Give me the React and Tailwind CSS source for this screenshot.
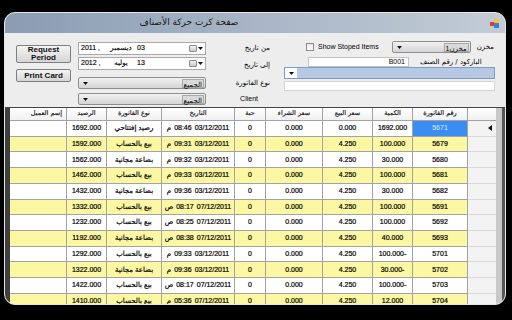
import React from 'react';

const rows = [
  ['5671', '1692.000', '0.000', '0.000', '0', '03/12/2011', '08:46', 'م', 'رصيد إفتتاحي', '1692.000'],
  ['5679', '100.000', '4.250', '0.000', '0', '03/12/2011', '09:31', 'م', 'بيع بالحساب', '1592.000'],
  ['5680', '30.000', '4.250', '0.000', '0', '03/12/2011', '09:32', 'م', 'بضاعة مجانية', '1562.000'],
  ['5681', '100.000', '4.250', '0.000', '0', '03/12/2011', '09:33', 'م', 'بيع بالحساب', '1462.000'],
  ['5682', '30.000', '4.250', '0.000', '0', '03/12/2011', '09:36', 'م', 'بضاعة مجانية', '1432.000'],
  ['5691', '100.000', '4.250', '0.000', '0', '07/12/2011', '08:17', 'ص', 'بيع بالحساب', '1332.000'],
  ['5692', '100.000', '4.250', '0.000', '0', '07/12/2011', '08:25', 'ص', 'بيع بالحساب', '1232.000'],
  ['5693', '40.000', '4.250', '0.000', '0', '07/12/2011', '08:38', 'ص', 'بضاعة مجانية', '1192.000'],
  ['5701', '100.000-', '4.250', '0.000', '0', '03/12/2011', '09:33', 'م', 'بيع بالحساب', '1292.000'],
  ['5702', '30.000-', '4.250', '0.000', '0', '03/12/2011', '09:36', 'م', 'بضاعة مجانية', '1322.000'],
  ['5703', '100.000-', '4.250', '0.000', '0', '07/12/2011', '08:17', 'ص', 'بيع بالحساب', '1422.000'],
  ['5704', '12.000', '4.250', '0.000', '0', '07/12/2011', '05:36', 'م', 'بيع بالحساب', '1410.000'],
];

const font = { fontFamily: '"Liberation Sans", "DejaVu Sans", sans-serif' };
const arabic = { fontFamily: '"DejaVu Sans", sans-serif' };

const Arrow = () => (
  <svg width="5" height="3" viewBox="0 0 5 3"><path d="M0 0h5L2.5 3z" fill="#111" /></svg>
);

const PickerButton = () => (
  <div className="flex items-center gap-[1px] mr-[2px]">
    <div className="w-[8px] h-[7px] border border-[#8a8a8a] bg-gradient-to-b from-[#f4f4f4] to-[#c9c9c9] rounded-[1px]" />
    <Arrow />
  </div>
);

const DatePicker = ({ year, month, day }) => (
  <div className="h-[13px] w-[128px] bg-white border border-[#a9a9a9] flex items-center text-[7px] text-black [-webkit-text-stroke:0.15px_#000]">
    <span className="ml-[2px] w-[26px]">{year} ,</span>
    <span className="w-[28px] text-center">{month}</span>
    <span className="ml-[2px]">{day}</span>
    <div className="flex-1" />
    <PickerButton />
  </div>
);

const GrayCombo = ({ text, w }) => (
  <div className={`h-[12px] ${w} border border-[#8e8e8e] rounded-[2px] bg-gradient-to-b from-[#f2f2f2] to-[#d4d4d4] flex items-center text-[7px] text-black`}>
    <span className="ml-[4px] flex"><Arrow /></span>
    <div className="flex-1" />
    <span className="mr-[1px] px-[1px] h-[9px] leading-[9px] bg-[#d9d9d9] border border-[#a8a8a8]">{text}</span>
  </div>
);

const Label = ({ children, mt, latin }) => (
  <div className={`${mt} h-[10px] leading-[10px] flex justify-end whitespace-nowrap ${latin ? 'mr-[2px]' : '-mr-[10px]'}`} style={latin ? font : arabic}>{children}</div>
);

const colW = ['w-[57px]', 'w-[40px]', 'w-[55px]', 'w-[73px]', 'w-[31px]', 'w-[57px]', 'w-[50px]', 'w-[40px]', 'w-[55px]'];
const headers = ['إسم العميل', 'الرصيد', 'نوع الفاتورة', 'التاريخ', 'حبة', 'سعر الشراء', 'سعر البيع', 'الكمية', 'رقم الفاتورة'];

const Row = ({ r, i }) => {
  const bg = i % 2 === 1 ? 'bg-[#fbf7a2]' : 'bg-white';
  const cells = ['', r[9], r[8], null, r[4], r[3], r[2], r[1], r[0]];
  return (
    <div className="flex h-[15.73px] shrink-0 text-[7px] text-black [-webkit-text-stroke:0.2px_#000]">
      {cells.map((c, k) => {
        const sel = i === 0 && k === 8;
        return (
          <div key={k} className={`${colW[k]} shrink-0 border-r border-b border-[#a3a3a3] flex items-center justify-center ${sel ? 'bg-[#3a8ef3] text-[#dcecff] [-webkit-text-stroke:0px]' : bg}`}>
            {k === 3 ? (
              <span className="flex gap-[3px]"><span>{r[7]}</span><span>{r[6]}</span><span>{r[5]}</span></span>
            ) : c}
          </div>
        );
      })}
      <div className="w-[28px] shrink-0 border-b border-[#dadada] bg-[#f3f3f3] flex items-center justify-end pr-[4px]">
        {i === 0 && <svg width="4" height="6" viewBox="0 0 4 6"><path d="M4 0v6L0 3z" fill="#111" /></svg>}
      </div>
    </div>
  );
};

export default function App() {
  return (
    <div className="w-[512px] h-[320px] bg-black overflow-hidden pt-[12px] pl-[4px]" style={font}>
      <div className="w-[502px] h-[293px] rounded-[11px] border border-[#e6e6e6] overflow-hidden flex flex-col bg-[#ececec]">
        {/* title bar */}
        <div className="h-[20px] shrink-0 flex items-center bg-gradient-to-r from-[#8b9cb3] via-[#a7b5c6] to-[#c3ccd6]">
          <div className="ml-[132px] w-[104px] text-center text-[9px] text-[#161616] whitespace-nowrap" style={arabic}>صفحة كرت حركة الأصناف</div>
          <div className="flex-1" />
          <svg className="mr-[6px]" width="9" height="9" viewBox="0 0 9 9">
            <rect x="0" y="3" width="4" height="4" fill="#d9412b" />
            <rect x="4" y="0" width="5" height="4" fill="#f4c531" />
            <rect x="4" y="4" width="5" height="5" fill="#3a7de0" />
          </svg>
        </div>

        {/* form */}
        <div className="h-[74px] shrink-0 flex bg-[#ededed]">
          <div className="ml-[11px] w-[55px] flex flex-col">
            <div className="mt-[12px] h-[18px] border border-[#7f7f7f] rounded-[2px] bg-gradient-to-b from-[#f5f5f5] to-[#d5d5d5] flex items-center justify-center text-center text-[8px] leading-[8px] font-bold text-[#111]">Request<br />Period</div>
            <div className="mt-[6px] h-[13px] border border-[#7f7f7f] rounded-[2px] bg-gradient-to-b from-[#f5f5f5] to-[#d5d5d5] flex items-center justify-center text-[8px] font-bold text-[#111]">Print Card</div>
          </div>
          <div className="ml-[7px] w-[128px] flex flex-col">
            <div className="mt-[9px]"><DatePicker year="2011" month="ديسمبر" day="03" /></div>
            <div className="mt-[2px]"><DatePicker year="2012" month="يوليه" day="13" /></div>
            <div className="mt-[7px]"><GrayCombo text="الجميع" w="w-[128px]" /></div>
            <div className="mt-[4px]"><GrayCombo text="الجميع" w="w-[128px]" /></div>
          </div>
          <div className="w-[54px] flex flex-col text-[7px] text-black">
            <Label mt="mt-[10px]">من تاريخ</Label>
            <Label mt="mt-[7px]">إلى تاريخ</Label>
            <Label mt="mt-[8px]">نوع الفاتورة</Label>
            <Label mt="mt-[6px]" latin>Client</Label>
          </div>
          <div className="ml-[24px] w-[211px] flex flex-col text-[7px] text-black">
            <div className="mt-[8px] h-[12px] flex items-center">
              <div className="ml-[22px] w-[8px] h-[8px] border border-[#8a8a8a] bg-gradient-to-b from-[#e8e8e8] to-[#ffffff]" />
              <span className="ml-[4px]">Show Stoped Items</span>
              <div className="ml-[13px]"><GrayCombo text="مخزن1" w="w-[79px]" /></div>
              <span className="ml-[6px]" style={arabic}>مخزن</span>
            </div>
            <div className="mt-[4px] h-[10px] flex items-center">
              <div className="ml-[24px] w-[101px] h-[10px] bg-white border border-[#c4c4c4] flex items-center justify-end pr-[3px]">B001</div>
              <span className="ml-[11px]" style={arabic}>الباركود / رقم الصنف</span>
            </div>
            <div className="h-[12px] border border-[#7b9cc6] bg-[#b7c9e2] flex items-center">
              <div className="w-[12px] h-full bg-white flex items-center justify-center"><Arrow /></div>
            </div>
            <div className="mt-[2px] h-[10px] bg-white border border-[#d4d4d4]" />
          </div>
        </div>

        {/* grid */}
        <div className="flex-1 flex border-t border-[#444] min-h-0">
          <div className="w-[5px] shrink-0 bg-[#3f3f3f]" />
          <div className="flex flex-col">
            <div className="flex h-[13px] shrink-0 text-[6.5px] text-[#111] bg-gradient-to-b from-[#ffffff] to-[#efefef] [-webkit-text-stroke:0.15px_#111]" style={arabic}>
              {headers.map((h, k) => (
                <div key={k} className={`${colW[k]} shrink-0 border-r border-b border-[#a3a3a3] flex items-center ${k === 0 ? 'justify-end pr-[4px]' : 'justify-center'}`}>{h}</div>
              ))}
              <div className="w-[28px] shrink-0 border-b border-[#a3a3a3]" />
            </div>
            {rows.map((r, i) => <Row key={i} r={r} i={i} />)}
          </div>
          <div className="w-[6px] shrink-0 bg-[#c8c8c8]" />
          <div className="w-[3px] shrink-0 bg-[#555]" />
        </div>
      </div>
    </div>
  );
}
